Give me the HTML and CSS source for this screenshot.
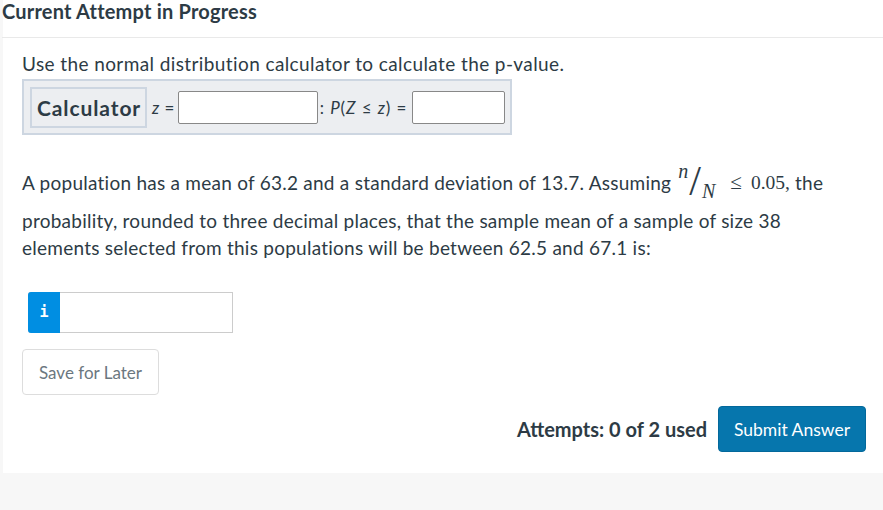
FILE: index.html
```html
<!DOCTYPE html>
<html lang="en">
<head>
    <meta charset="UTF-8">
    <title>Current Attempt in Progress</title>
    <link rel="stylesheet" href="styles.css">
</head>
<body>
    <div class="panel">
        <h1 class="attempt-title">Current Attempt in Progress</h1>

        <div class="question">
            <p class="intro">Use the normal distribution calculator to calculate the p-value.</p>

            <div class="calc-box">
                <span class="calc-btn">Calculator</span>
                <span class="calc-label first"><i>z</i> =</span>
                <span class="calc-input wide"></span>
                <span class="calc-label second">: <i>P</i>(<i>Z</i> &le; <i>z</i>) =</span>
                <span class="calc-input narrow"></span>
            </div>

            <p class="problem">
                A population has a mean of 63.2 and a standard deviation of 13.7. Assuming
                <span class="math"><i class="num">n</i><span class="slash">/</span><i class="den">N</i><span class="rel">&le;</span><span class="val">0.05,</span></span>
                the probability, rounded to three decimal places, that the sample mean of a sample of size 38
                elements selected from this populations will be between 62.5 and 67.1 is:
            </p>

            <div class="answer">
                <span class="answer-icon">i</span>
                <span class="answer-field"></span>
            </div>

            <button class="save-btn">Save for Later</button>

            <div class="footer">
                <span class="attempts">Attempts: 0 of 2 used</span>
                <button class="submit-btn">Submit Answer</button>
            </div>
        </div>
    </div>
</body>
</html>
```

FILE: styles.css
```css
body {
    margin: 0;
    background-color: #f7f7f7;
    font-family: Lato, "Open Sans", sans-serif;
    color: #2d3b45;
}
.panel {
    margin-left: 3px;
    height: 473px;
    background-color: #fff;
}
.attempt-title {
    margin: 0 0 0 -1px;
    height: 38px;
    box-sizing: border-box;
    border-bottom: 1px solid #e9e9e9;
    font-size: 20px;
    font-weight: bold;
    letter-spacing: 0.2px;
    line-height: 22px;
}
.question {
    padding: 0 17px 0 19px;
}
.intro {
    margin: 12px 0 0;
    font-size: 19px;
    letter-spacing: 0.4px;
    line-height: 27px;
}
.calc-box {
    display: flex;
    align-items: center;
    width: fit-content;
    height: 52px;
    margin-top: 2px;
    padding: 0 5px 0 6px;
    background-color: #eceef1;
    border: 2px solid #cdd6e1;
}
.calc-btn {
    height: 37px;
    padding: 0 4px 0 5px;
    border: 2px solid #cdd6e1;
    font-size: 21px;
    font-weight: bold;
    letter-spacing: 0.9px;
    line-height: 37px;
}
.calc-label {
    margin: 0 3px 0 2px;
    font-size: 17px;
    letter-spacing: 0.4px;
    white-space: pre;
}
.calc-label.first {
    margin-left: 5px;
}
.calc-label.second {
    letter-spacing: 0.9px;
    margin-right: 5px;
}
.calc-input {
    height: 31px;
    background-color: #fff;
    border: 1px solid #888;
    border-radius: 2px;
}
.calc-input.wide {
    width: 138px;
}
.calc-input.narrow {
    width: 91px;
}
.problem {
    width: 830px;
    margin: 34px 0 0;
    font-size: 19px;
    letter-spacing: 0.25px;
    line-height: 27px;
}
.math {
    display: inline-block;
    vertical-align: top;
    height: 38px;
    margin-left: 2px;
    font-family: "Liberation Serif", "DejaVu Serif", serif;
    font-size: 20px;
    letter-spacing: 0;
    line-height: 27px;
    white-space: nowrap;
}
.math .num {
    position: relative;
    top: -11px;
    font-size: 20px;
}
.math .slash {
    position: relative;
    top: 6px;
    margin: 0 1px 0 1px;
    font-size: 42px;
    line-height: 0;
}
.math .den {
    position: relative;
    top: 9px;
    font-size: 20px;
}
.math .rel {
    margin-left: 15px;
    font-size: 21px;
}
.math .val {
    margin-left: 9px;
    font-size: 19.5px;
}
.answer {
    display: flex;
    width: 205px;
    height: 41px;
    margin: 31px 0 0 6px;
    box-sizing: border-box;
    border: 1px solid #ccc;
    border-left: none;
    border-radius: 3px 0 0 3px;
}
.answer-icon {
    width: 32px;
    margin: -1px 0;
    background-color: #008ee2;
    border-radius: 3px 0 0 3px;
    color: #fff;
    font-family: "DejaVu Sans Mono", monospace;
    font-weight: bold;
    font-size: 15px;
    line-height: 41px;
    text-align: center;
}
.answer-field {
    flex: 1;
}
.save-btn {
    display: block;
    width: 137px;
    height: 46px;
    margin-top: 16px;
    background-color: #fff;
    border: 1px solid #ddd;
    border-radius: 4px;
    color: #6b7780;
    font-family: Lato, sans-serif;
    font-size: 17px;
}
.footer {
    display: flex;
    justify-content: flex-end;
    align-items: center;
    gap: 11px;
    margin-top: 11px;
}
.attempts {
    font-size: 20px;
    font-weight: bold;
}
.submit-btn {
    width: 148px;
    height: 46px;
    background-color: #0676ad;
    border: 1px solid #03689b;
    border-radius: 4px;
    color: #fff;
    font-family: Lato, sans-serif;
    font-size: 17.5px;
}
```
